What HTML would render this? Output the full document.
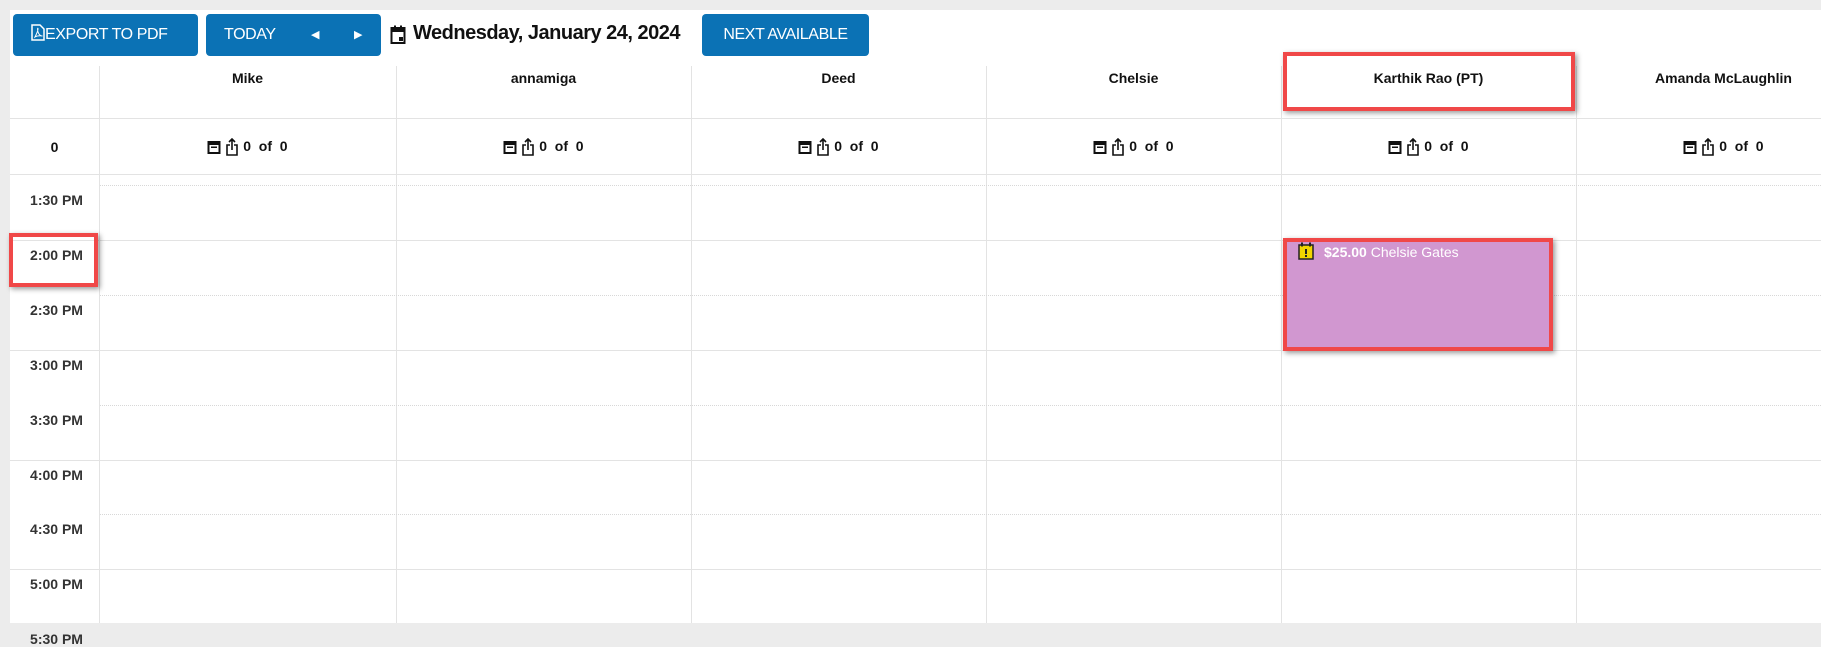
<!DOCTYPE html>
<html><head><meta charset="utf-8"><style>
*{box-sizing:border-box;margin:0;padding:0}
body{width:1821px;height:637px;background:#ececec;font-family:"Liberation Sans",sans-serif;position:relative;overflow:hidden}
.panel{position:absolute;left:10px;top:10px;width:1811px;height:627px;background:#fff}
.btn{position:absolute;top:14px;height:42px;background:#0b72b5;color:#fff;border-radius:4px;font-size:16px;line-height:42px;letter-spacing:-0.4px}
.abs{position:absolute}
.hl{position:absolute;background:#e3e3e3}
.dl{position:absolute;height:0;border-top:1px dotted #d8d8d8}
.name{position:absolute;top:70px;width:295px;text-align:center;font-weight:bold;font-size:14px;color:#111}
.sum{position:absolute;top:138px;width:295px;text-align:center;font-weight:bold;font-size:14px;color:#111}
.sum svg{vertical-align:middle}
.t{position:absolute;left:14px;width:85px;text-align:center;font-weight:bold;font-size:14px;color:#333}
.red{position:absolute;border:4px solid #f04848;box-shadow:2px 2px 5px rgba(0,0,0,.4)}
</style></head><body>
<div class="panel"></div>
<div class="btn" style="left:13px;width:185px;padding-left:18px"><svg width="14" height="17" viewBox="0 0 14 17" style="vertical-align:-2px"><path d="M1 1h8l4 4v11H1z" fill="none" stroke="#fff" stroke-width="1.5"/><path d="M4 13c2-4 3-6 3-8s-1 0 0 3 3 4 4 4-4-1-7 1z" fill="none" stroke="#fff" stroke-width="1"/></svg>EXPORT TO PDF</div>
<div class="btn" style="left:206px;width:175px;padding-left:18px">TODAY<span style="position:absolute;left:105px;font-size:11px">◀</span><span style="position:absolute;left:148px;font-size:11px">▶</span></div>
<svg class="abs" style="left:390px;top:25px" width="16" height="20" viewBox="0 0 16 20"><rect x="1.5" y="3" width="13" height="15" fill="none" stroke="#111" stroke-width="2"/><rect x="1.5" y="3" width="13" height="4" fill="#111"/><rect x="4" y="0.5" width="2" height="4" fill="#111"/><rect x="10" y="0.5" width="2" height="4" fill="#111"/><rect x="9" y="12" width="4" height="4" fill="#111"/></svg>
<div class="abs" style="left:413px;top:22px;font-size:20px;font-weight:bold;color:#111;letter-spacing:-0.5px">Wednesday, January 24, 2024</div>
<div class="btn" style="left:702px;width:167px;text-align:center">NEXT AVAILABLE</div>

<div class="hl" style="left:99px;top:66px;width:1px;height:571px"></div>
<div class="hl" style="left:396px;top:66px;width:1px;height:571px"></div>
<div class="hl" style="left:691px;top:66px;width:1px;height:571px"></div>
<div class="hl" style="left:986px;top:66px;width:1px;height:571px"></div>
<div class="hl" style="left:1281px;top:66px;width:1px;height:571px"></div>
<div class="hl" style="left:1576px;top:66px;width:1px;height:571px"></div>
<div class="hl" style="left:10px;top:118px;width:1811px;height:1px"></div>
<div class="hl" style="left:10px;top:174px;width:1811px;height:1px"></div>
<div class="dl" style="left:100px;top:185px;width:1721px"></div>
<div class="hl" style="left:10px;top:240px;width:1811px;height:1px"></div>
<div class="dl" style="left:100px;top:295px;width:1721px"></div>
<div class="hl" style="left:10px;top:350px;width:1811px;height:1px"></div>
<div class="dl" style="left:100px;top:405px;width:1721px"></div>
<div class="hl" style="left:10px;top:460px;width:1811px;height:1px"></div>
<div class="dl" style="left:100px;top:514px;width:1721px"></div>
<div class="hl" style="left:10px;top:569px;width:1811px;height:1px"></div>
<div class="abs" style="left:10px;top:623px;width:1811px;height:14px;background:#ececec"></div>

<div class="name" style="left:100px">Mike</div>
<div class="name" style="left:396px">annamiga</div>
<div class="name" style="left:691px">Deed</div>
<div class="name" style="left:986px">Chelsie</div>
<div class="name" style="left:1281px">Karthik Rao (PT)</div>
<div class="name" style="left:1576px">Amanda McLaughlin</div>

<div class="abs" style="left:10px;top:139px;width:89px;text-align:center;font-weight:bold;font-size:14px;color:#111">0</div>
<div class="sum" style="left:100px"><svg width="14" height="16" viewBox="0 0 14 16"><rect x="1.5" y="3" width="11" height="11" fill="none" stroke="#111" stroke-width="2"/><rect x="1.5" y="3" width="11" height="3" fill="#111"/><rect x="4" y="7.5" width="6" height="1.5" fill="#111"/></svg>&nbsp;<svg width="14" height="18" viewBox="0 0 14 18"><path d="M5 7H2v10h10V7H9M7 12V1M4 4l3-3 3 3" fill="none" stroke="#111" stroke-width="1.6"/></svg> 0&nbsp; of&nbsp; 0</div>
<div class="sum" style="left:396px"><svg width="14" height="16" viewBox="0 0 14 16"><rect x="1.5" y="3" width="11" height="11" fill="none" stroke="#111" stroke-width="2"/><rect x="1.5" y="3" width="11" height="3" fill="#111"/><rect x="4" y="7.5" width="6" height="1.5" fill="#111"/></svg>&nbsp;<svg width="14" height="18" viewBox="0 0 14 18"><path d="M5 7H2v10h10V7H9M7 12V1M4 4l3-3 3 3" fill="none" stroke="#111" stroke-width="1.6"/></svg> 0&nbsp; of&nbsp; 0</div>
<div class="sum" style="left:691px"><svg width="14" height="16" viewBox="0 0 14 16"><rect x="1.5" y="3" width="11" height="11" fill="none" stroke="#111" stroke-width="2"/><rect x="1.5" y="3" width="11" height="3" fill="#111"/><rect x="4" y="7.5" width="6" height="1.5" fill="#111"/></svg>&nbsp;<svg width="14" height="18" viewBox="0 0 14 18"><path d="M5 7H2v10h10V7H9M7 12V1M4 4l3-3 3 3" fill="none" stroke="#111" stroke-width="1.6"/></svg> 0&nbsp; of&nbsp; 0</div>
<div class="sum" style="left:986px"><svg width="14" height="16" viewBox="0 0 14 16"><rect x="1.5" y="3" width="11" height="11" fill="none" stroke="#111" stroke-width="2"/><rect x="1.5" y="3" width="11" height="3" fill="#111"/><rect x="4" y="7.5" width="6" height="1.5" fill="#111"/></svg>&nbsp;<svg width="14" height="18" viewBox="0 0 14 18"><path d="M5 7H2v10h10V7H9M7 12V1M4 4l3-3 3 3" fill="none" stroke="#111" stroke-width="1.6"/></svg> 0&nbsp; of&nbsp; 0</div>
<div class="sum" style="left:1281px"><svg width="14" height="16" viewBox="0 0 14 16"><rect x="1.5" y="3" width="11" height="11" fill="none" stroke="#111" stroke-width="2"/><rect x="1.5" y="3" width="11" height="3" fill="#111"/><rect x="4" y="7.5" width="6" height="1.5" fill="#111"/></svg>&nbsp;<svg width="14" height="18" viewBox="0 0 14 18"><path d="M5 7H2v10h10V7H9M7 12V1M4 4l3-3 3 3" fill="none" stroke="#111" stroke-width="1.6"/></svg> 0&nbsp; of&nbsp; 0</div>
<div class="sum" style="left:1576px"><svg width="14" height="16" viewBox="0 0 14 16"><rect x="1.5" y="3" width="11" height="11" fill="none" stroke="#111" stroke-width="2"/><rect x="1.5" y="3" width="11" height="3" fill="#111"/><rect x="4" y="7.5" width="6" height="1.5" fill="#111"/></svg>&nbsp;<svg width="14" height="18" viewBox="0 0 14 18"><path d="M5 7H2v10h10V7H9M7 12V1M4 4l3-3 3 3" fill="none" stroke="#111" stroke-width="1.6"/></svg> 0&nbsp; of&nbsp; 0</div>

<div class="t" style="top:192px">1:30 PM</div>
<div class="t" style="top:247px">2:00 PM</div>
<div class="t" style="top:302px">2:30 PM</div>
<div class="t" style="top:357px">3:00 PM</div>
<div class="t" style="top:412px">3:30 PM</div>
<div class="t" style="top:467px">4:00 PM</div>
<div class="t" style="top:521px">4:30 PM</div>
<div class="t" style="top:576px">5:00 PM</div>
<div class="t" style="top:631px">5:30 PM</div>

<div class="abs" style="left:1284px;top:240px;width:267px;height:109px;background:#d197d0"></div>
<svg class="abs" style="left:1298px;top:242px" width="16" height="18" viewBox="0 0 16 18"><rect x="1" y="3" width="14" height="14" fill="#f2d500" stroke="#222" stroke-width="1.5"/><rect x="3" y="0.5" width="2" height="4" fill="#222"/><rect x="11" y="0.5" width="2" height="4" fill="#222"/><rect x="7" y="7" width="2" height="5" fill="#222"/><rect x="7" y="13" width="2" height="2" fill="#222"/></svg>
<div class="abs" style="left:1324px;top:244px;font-size:14px;color:#fff"><b>$25.00</b> Chelsie Gates</div>

<div class="red" style="left:1283px;top:52px;width:292px;height:59px"></div>
<div class="red" style="left:1283px;top:238px;width:270px;height:113px"></div>
<div class="red" style="left:9px;top:233px;width:89px;height:54px"></div>
</body></html>
